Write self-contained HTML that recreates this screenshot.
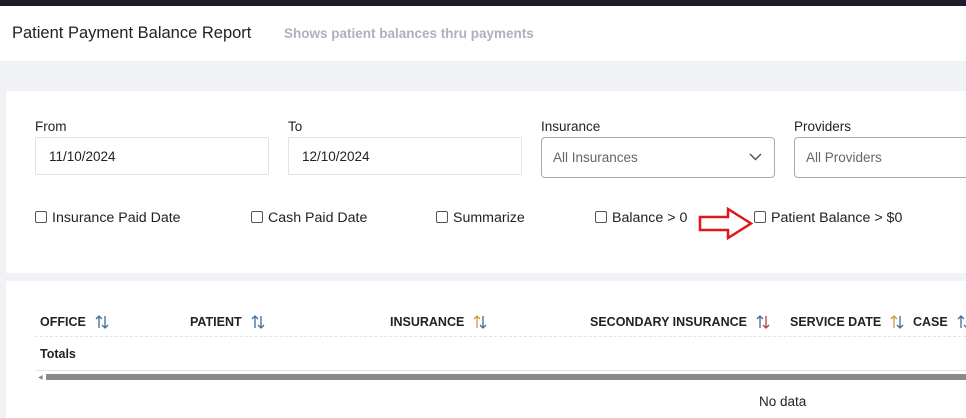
<!DOCTYPE html>
<html><head><style>
*{box-sizing:border-box;margin:0;padding:0}
body{width:966px;height:418px;overflow:hidden;background:#f1f2f5;font-family:"Liberation Sans",sans-serif;position:relative}
.top{position:absolute;left:0;top:0;width:966px;height:6px;background:#1e1c2b}
.hdr{position:absolute;left:0;top:6px;width:966px;height:55px;background:#fff}
.hdr .t{position:absolute;left:12px;top:18px;font-size:16.5px;color:#222}
.hdr .s{position:absolute;left:284px;top:20px;font-size:13.5px;font-weight:bold;color:#aeb0bf}
.card{position:absolute;left:6px;width:960px;background:#fff}
.lbl{position:absolute;font-size:13.5px;color:#222}
.inp{position:absolute;height:38px;border:1px solid #e2e4ec;font-size:13.5px;color:#222;padding:11px 0 0 13px}
.sel{position:absolute;height:41px;border:1px solid #a9a9a9;border-radius:4px;font-size:13.5px;color:#666;padding:12px 0 0 11px}
.cb{position:absolute;font-size:14.2px;color:#222;top:210px}
.cb i{display:inline-block;width:12px;height:12px;border:1px solid #555;border-radius:2px;vertical-align:-1px;margin-right:5px}
.th{position:absolute;top:315px;font-size:12.5px;font-weight:bold;color:#222;white-space:nowrap}
.th svg{vertical-align:-3px;margin-left:9px}
</style></head><body>
<div class="top"></div>
<div class="hdr"><div class="t">Patient Payment Balance Report</div><div class="s">Shows patient balances thru payments</div></div>
<div class="card" style="top:91px;height:182px"></div>
<div class="card" style="top:281px;height:137px"></div>
<div class="lbl" style="left:35px;top:119px">From</div>
<div class="lbl" style="left:288px;top:119px">To</div>
<div class="lbl" style="left:541px;top:119px">Insurance</div>
<div class="lbl" style="left:794px;top:119px">Providers</div>
<div class="inp" style="left:35px;top:137px;width:234px">11/10/2024</div>
<div class="inp" style="left:288px;top:137px;width:234px">12/10/2024</div>
<div class="sel" style="left:541px;top:137px;width:234px">All Insurances
<svg style="position:absolute;right:12px;top:15px" width="13" height="8" viewBox="0 0 13 8"><path d="M1 1l5.5 5.5L12 1" fill="none" stroke="#555" stroke-width="1.5"/></svg></div>
<div class="sel" style="left:794px;top:137px;width:200px">All Providers</div>
<div class="cb" style="left:35px"><i></i>Insurance Paid Date</div>
<div class="cb" style="left:251px"><i></i>Cash Paid Date</div>
<div class="cb" style="left:436px"><i></i>Summarize</div>
<div class="cb" style="left:595px"><i></i>Balance &gt; 0</div>
<div class="cb" style="left:754px"><i></i>Patient Balance &gt; $0</div>
<svg style="position:absolute;left:698px;top:207px" width="56" height="33" viewBox="0 0 56 33"><path d="M2 10h28V2l23 14.5L30 31v-8H2z" fill="none" stroke="#e0161e" stroke-width="2.5"/></svg>
<div class="th" style="left:40px">OFFICE<svg width="14" height="14" viewBox="0 0 14 14"><path d="M4 13V1M1 4l3-3 3 3" fill="none" stroke="#3f6d96" stroke-width="1.3"/><path d="M10 1v12M7 10l3 3 3-3" fill="none" stroke="#3f6d96" stroke-width="1.3"/></svg></div>
<div class="th" style="left:190px">PATIENT<svg width="14" height="14" viewBox="0 0 14 14"><path d="M4 13V1M1 4l3-3 3 3" fill="none" stroke="#3f6d96" stroke-width="1.3"/><path d="M10 1v12M7 10l3 3 3-3" fill="none" stroke="#3f6d96" stroke-width="1.3"/></svg></div>
<div class="th" style="left:390px">INSURANCE<svg width="14" height="14" viewBox="0 0 14 14"><path d="M4 13V1M1 4l3-3 3 3" fill="none" stroke="#c99a3a" stroke-width="1.3"/><path d="M10 1v12M7 10l3 3 3-3" fill="none" stroke="#3f6d96" stroke-width="1.3"/></svg></div>
<div class="th" style="left:590px">SECONDARY INSURANCE<svg width="14" height="14" viewBox="0 0 14 14"><path d="M4 13V1M1 4l3-3 3 3" fill="none" stroke="#3f6d96" stroke-width="1.3"/><path d="M10 1v12M7 10l3 3 3-3" fill="none" stroke="#b04040" stroke-width="1.3"/></svg></div>
<div class="th" style="left:790px">SERVICE DATE<svg width="14" height="14" viewBox="0 0 14 14"><path d="M4 13V1M1 4l3-3 3 3" fill="none" stroke="#c99a3a" stroke-width="1.3"/><path d="M10 1v12M7 10l3 3 3-3" fill="none" stroke="#3f6d96" stroke-width="1.3"/></svg></div>
<div class="th" style="left:913px">CASE<svg width="14" height="14" viewBox="0 0 14 14"><path d="M4 13V1M1 4l3-3 3 3" fill="none" stroke="#3f6d96" stroke-width="1.3"/><path d="M10 1v12M7 10l3 3 3-3" fill="none" stroke="#3f6d96" stroke-width="1.3"/></svg></div>
<div style="position:absolute;left:35px;top:336px;width:931px;border-top:1px dashed #e4e4e4"></div>
<div class="th" style="left:40px;top:347px">Totals</div>
<div style="position:absolute;left:35px;top:370px;width:931px;border-top:1px solid #e6e6e6"></div>
<div style="position:absolute;left:38px;top:374px;font-size:6px;color:#888">◀</div>
<div style="position:absolute;left:46px;top:374px;width:920px;height:6px;background:#8a8a8a"></div>
<div style="position:absolute;left:759px;top:394px;font-size:13.5px;color:#222">No data</div>
</body></html>
